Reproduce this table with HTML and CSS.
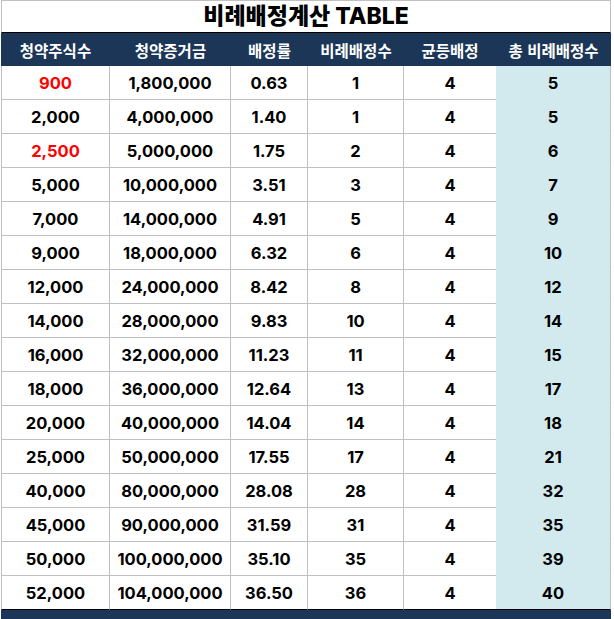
FILE: index.html
```html
<!DOCTYPE html>
<html lang="ko">
<head>
<meta charset="utf-8">
<title>비례배정계산 TABLE</title>
<link rel="stylesheet" href="styles.css">
</head>
<body>
<table class="calc">
  <colgroup>
    <col class="c1"><col class="c2"><col class="c3"><col class="c4"><col class="c5"><col class="c6">
  </colgroup>
  <thead>
    <tr class="title-row"><th colspan="6" class="title">비례배정계산 TABLE</th></tr>
    <tr class="head-row">
      <th>청약주식수</th><th>청약증거금</th><th>배정률</th><th>비례배정수</th><th>균등배정</th><th>총 비례배정수</th>
    </tr>
  </thead>
  <tbody>
    <tr><td class="red">900</td><td>1,800,000</td><td>0.63</td><td>1</td><td>4</td><td class="total">5</td></tr>
    <tr><td>2,000</td><td>4,000,000</td><td>1.40</td><td>1</td><td>4</td><td class="total">5</td></tr>
    <tr><td class="red">2,500</td><td>5,000,000</td><td>1.75</td><td>2</td><td>4</td><td class="total">6</td></tr>
    <tr><td>5,000</td><td>10,000,000</td><td>3.51</td><td>3</td><td>4</td><td class="total">7</td></tr>
    <tr><td>7,000</td><td>14,000,000</td><td>4.91</td><td>5</td><td>4</td><td class="total">9</td></tr>
    <tr><td>9,000</td><td>18,000,000</td><td>6.32</td><td>6</td><td>4</td><td class="total">10</td></tr>
    <tr><td>12,000</td><td>24,000,000</td><td>8.42</td><td>8</td><td>4</td><td class="total">12</td></tr>
    <tr><td>14,000</td><td>28,000,000</td><td>9.83</td><td>10</td><td>4</td><td class="total">14</td></tr>
    <tr><td>16,000</td><td>32,000,000</td><td>11.23</td><td>11</td><td>4</td><td class="total">15</td></tr>
    <tr><td>18,000</td><td>36,000,000</td><td>12.64</td><td>13</td><td>4</td><td class="total">17</td></tr>
    <tr><td>20,000</td><td>40,000,000</td><td>14.04</td><td>14</td><td>4</td><td class="total">18</td></tr>
    <tr><td>25,000</td><td>50,000,000</td><td>17.55</td><td>17</td><td>4</td><td class="total">21</td></tr>
    <tr><td>40,000</td><td>80,000,000</td><td>28.08</td><td>28</td><td>4</td><td class="total">32</td></tr>
    <tr><td>45,000</td><td>90,000,000</td><td>31.59</td><td>31</td><td>4</td><td class="total">35</td></tr>
    <tr><td>50,000</td><td>100,000,000</td><td>35.10</td><td>35</td><td>4</td><td class="total">39</td></tr>
    <tr class="last"><td>52,000</td><td>104,000,000</td><td>36.50</td><td>36</td><td>4</td><td class="total">40</td></tr>
  </tbody>
</table>
<div class="footer-band"></div>
</body>
</html>
```
FILE: styles.css
```css
html, body {
  margin: 0;
  padding: 0;
  background: #ffffff;
}

body {
  font-family: Inter, "Noto Sans CJK KR", sans-serif;
  color: #000000;
}

.calc {
  margin-left: 1px;
  width: 610px;
  table-layout: fixed;
  border-collapse: separate;
  border-spacing: 0;
}

.c1 { width: 109px; }
.c2 { width: 121px; }
.c3 { width: 77px; }
.c4 { width: 96px; }
.c5 { width: 92px; }
.c6 { width: 115px; }

.calc th,
.calc td {
  box-sizing: border-box;
  padding: 0;
  text-align: center;
  vertical-align: middle;
}

.title {
  height: 33px;
  border-top: 1px solid #c0c0c0;
  border-left: 1px solid #c0c0c0;
  border-right: 1px solid #c0c0c0;
  border-bottom: 1px solid #000000;
  font-family: Inter, "Noto Sans CJK KR", sans-serif;
  font-size: 23px;
  font-weight: 800;
  line-height: 23px;
  padding-top: 3px;
}

.head-row th {
  height: 33px;
  background: #1b3657;
  color: #ffffff;
  font-family: "Noto Sans CJK KR", sans-serif;
  font-size: 15.5px;
  font-weight: 700;
  line-height: 16px;
}

.calc td {
  height: 34px;
  border-bottom: 1px solid #c0c0c0;
  border-right: 1px solid #c0c0c0;
  font-size: 16.5px;
  font-weight: 700;
  line-height: 18px;
  padding-top: 1px;
}

.calc td:first-child {
  border-left: 1px solid #c0c0c0;
}

.calc td:nth-child(5) {
  border-right: none;
}

.calc td.total {
  background: #d2e9ee;
  border-bottom-color: #d2e9ee;
}

.calc tr.last td {
  border-bottom-color: #000000;
}

.red {
  color: #ff0000;
}

.footer-band {
  margin-left: 1px;
  width: 610px;
  height: 20px;
  background: #1b3657;
}
```
